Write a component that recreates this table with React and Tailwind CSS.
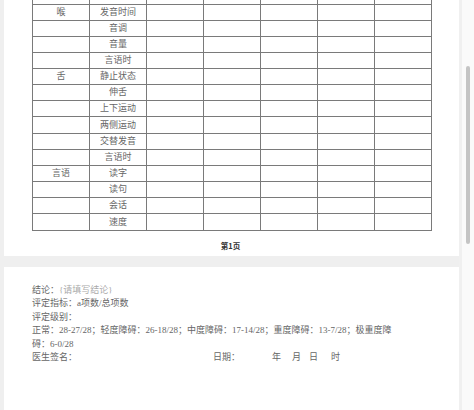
import React from "react";

const rows = [
  { a: "", b: "言语时", h: "h-[16px]" },
  { a: "喉", b: "发音时间", h: "h-[16px]" },
  { a: "", b: "音调", h: "h-[16px]" },
  { a: "", b: "音量", h: "h-[16px]" },
  { a: "", b: "言语时", h: "h-[16px]" },
  { a: "舌", b: "静止状态", h: "h-[16px]" },
  { a: "", b: "伸舌", h: "h-[16px]" },
  { a: "", b: "上下运动", h: "h-[16px]" },
  { a: "", b: "两侧运动", h: "h-[17px]" },
  { a: "", b: "交替发音", h: "h-[16px]" },
  { a: "", b: "言语时", h: "h-[16px]" },
  { a: "言语", b: "读字", h: "h-[16px]" },
  { a: "", b: "读句", h: "h-[16px]" },
  { a: "", b: "会话", h: "h-[16px]" },
  { a: "", b: "速度", h: "h-[17px]" },
];

const serif = "font-['Liberation_Serif','Noto_Sans_CJK_SC',serif]";

const Cell = ({ children }) => (
  <div className="w-[57px] shrink-0 border-r border-[#7a7a7a] flex items-center justify-center">
    {children}
  </div>
);

const App = () => {
  return (
    <div className="w-[474px] h-[410px] overflow-hidden bg-[#efefef] flex">
      <div className="w-[459px] shrink-0 flex flex-col pl-[4px]">
        {/* page 1, top cut off */}
        <div className="bg-white h-[256px] overflow-hidden flex flex-col">
          <div className={`-mt-[11px] ml-[28px] w-[400px] border-l border-[#7a7a7a] text-[9px] leading-none text-[#666] ${serif}`}>
            {rows.map((r, i) => (
              <div key={i} className={`flex border-b border-[#7a7a7a] ${r.h}`}>
                <Cell>{r.a}</Cell>
                <Cell>{r.b}</Cell>
                <Cell />
                <Cell />
                <Cell />
                <Cell />
                <Cell />
              </div>
            ))}
          </div>
          <div className="mt-[11px] text-center pr-[2px] text-[7.5px] leading-none font-bold text-[#333] font-['Noto_Sans_CJK_SC',sans-serif]">
            第1页
          </div>
        </div>
        {/* page 2 */}
        <div className="mt-[11px] flex-1 bg-white pt-[17px] pl-[28px]">
          <div className={`text-[9px] leading-[13.4px] text-[#666] ${serif}`}>
            <div>
              结论：<span className="text-[#aaa]">{"{请填写结论}"}</span>
            </div>
            <div>评定指标：a项数/总项数</div>
            <div>评定级别：</div>
            <div>
              正常：28-27/28；轻度障碍：26-18/28；中度障碍：17-14/28；重度障碍：13-7/28；极重度障
              <br />
              碍：6-0/28
            </div>
            <div className="flex">
              <span className="w-[181px]">医生签名：</span>
              <span>日期：</span>
              <span className="ml-[32px]">年</span>
              <span className="ml-[11px]">月</span>
              <span className="ml-[8px]">日</span>
              <span className="ml-[13px]">时</span>
            </div>
          </div>
        </div>
      </div>
      {/* scrollbar */}
      <div className="flex-1 flex bg-[#fafafa] border-l-[3px] border-[#f0f0f0]">
        <div className="ml-[4px] w-[4px] flex flex-col">
          <div className="h-[66px]" />
          <div className="h-[178px] rounded-[2px] bg-[#c4c4c4]" />
        </div>
      </div>
    </div>
  );
};

export default App;
